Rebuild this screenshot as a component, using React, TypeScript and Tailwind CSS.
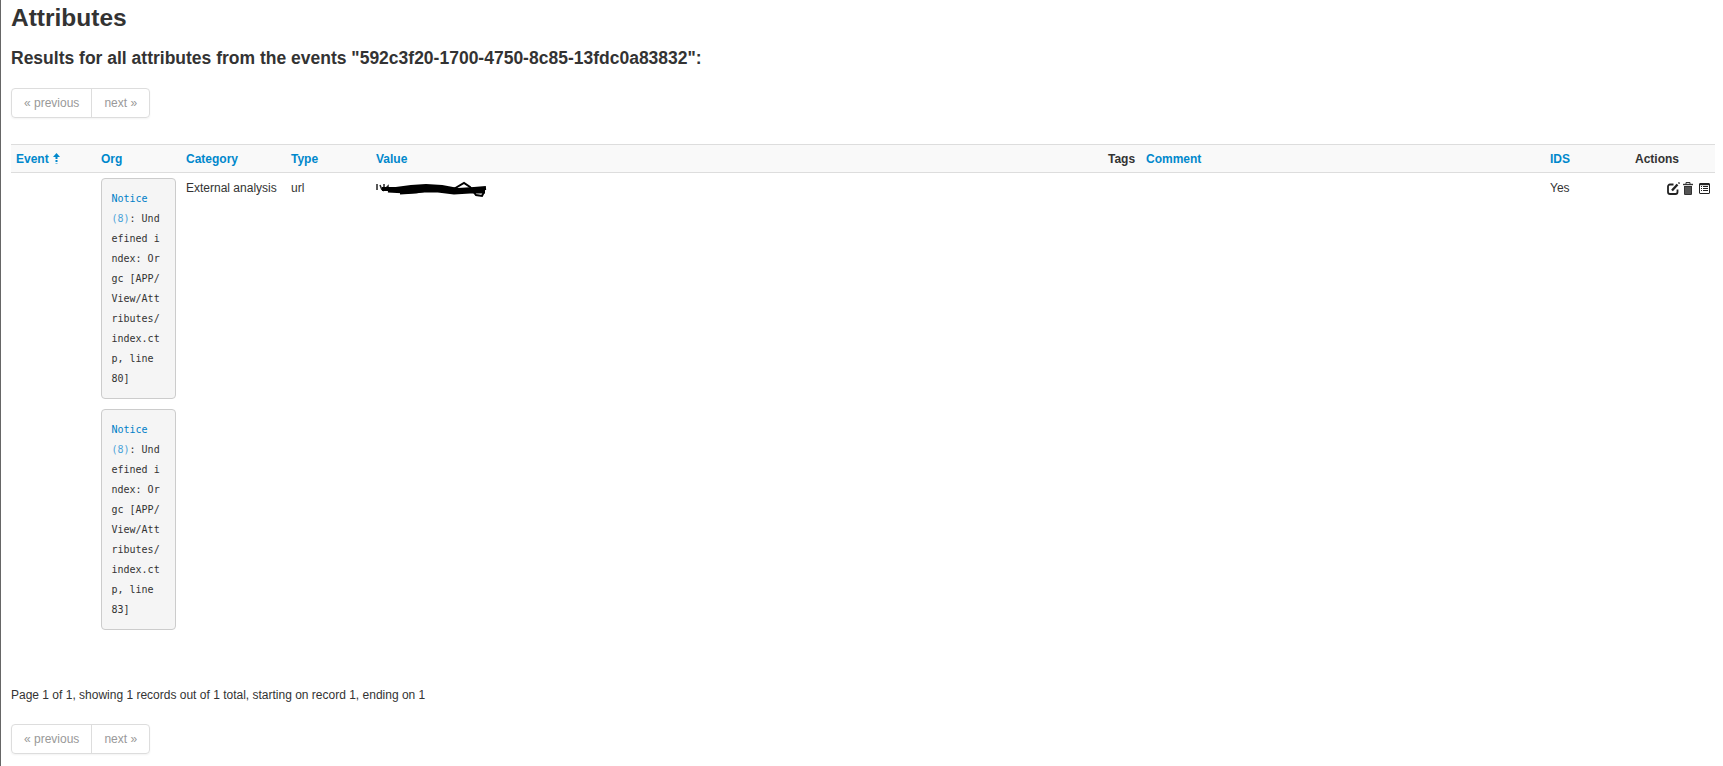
const columns = [
    { label: 'Event', link: true, width: 'w-[85px]' },
    { label: 'Org', link: true, width: 'w-[85px]' },
    { label: 'Category', link: true, width: 'w-[105px]' },
    { label: 'Type', link: true, width: 'w-[85px]' },
    { label: 'Value', link: true, width: 'w-[732px]' },
    { label: 'Tags', link: false, width: 'w-[38px]' },
    { label: 'Comment', link: true, width: 'w-[404px]' },
    { label: 'IDS', link: true, width: 'w-[85px]' },
    { label: 'Actions', link: false, width: 'w-[85px]' },
];

function Pager() {
    return (
        <div className="inline-flex h-[30px] rounded border border-[#ddd] shadow-[0_1px_2px_rgba(0,0,0,0.05)] text-[#999]">
            <span className="px-[12px] leading-[28px] border-r border-[#ddd]">« previous</span>
            <span className="px-[12px] leading-[28px]">next »</span>
        </div>
    );
}

function Notice({ line }: { line: number }) {
    return (
        <pre className="w-[75px] mb-[10px] p-[9.5px] bg-[#f5f5f5] border border-[#ccc] rounded text-[10px] leading-[20px] text-[#333] whitespace-pre-wrap break-all font-['DejaVu_Sans_Mono',monospace]">
            <span className="text-[#0080c8]">Notice</span> <span className="text-[#4ba3d9]">(8)</span>: Undefined index: Orgc [APP/View/Attributes/index.ctp, line {line}]
        </pre>
    );
}

function SortArrow() {
    return (
        <svg width="7" height="11" viewBox="0 0 7 11" className="inline-block ml-[4px] mb-[1px]">
            <path d="M3.5 0 L7 4 H0 Z" fill="#0088cc" />
            <path d="M3.5 4 V10.5" stroke="#0088cc" strokeWidth="2" strokeDasharray="2 1" />
        </svg>
    );
}

function Scribble() {
    return (
        <svg width="112" height="17" viewBox="0 0 112 17" className="mt-[3px]">
            <path d="M1 3 V9 M4 4 L6 9 M8 3 V9 L12 5 V9" fill="none" stroke="#222" strokeWidth="1.5" />
            <path d="M6 8 L20 8 L35 6 L50 5 L66 6 L82 9 L98 8 L110 7" fill="none" stroke="#000" strokeWidth="4" />
            <path d="M12 9 L30 10 L48 9 L62 9 L78 11 L94 10 L109 10" fill="none" stroke="#000" strokeWidth="5" />
            <path d="M24 12 L40 11 L62 7 L70 10" fill="none" stroke="#000" strokeWidth="3" />
            <path d="M76 9 L88 2 L94 6 L100 14 L106 15 L108 11" fill="none" stroke="#000" strokeWidth="2" />
        </svg>
    );
}

function EditIcon() {
    return (
        <svg width="13" height="13" viewBox="0 0 13 13" fill="none" stroke="#222">
            <path d="M6.5 2.5 H3 A2 2 0 0 0 1 4.5 V10 A2 2 0 0 0 3 12 H8.5 A2 2 0 0 0 10.5 10 V7.5" strokeWidth="1.8" />
            <path d="M5 8.5 L10.5 2.5" strokeWidth="2.4" />
            <path d="M11.5 1.5 L12.5 0.5" strokeWidth="1.6" />
        </svg>
    );
}

function TrashIcon() {
    return (
        <svg width="10" height="13" viewBox="0 0 10 13" fill="none">
            <path d="M3 2 V0.5 H7 V2" stroke="#333" />
            <path d="M0 2.5 H10" stroke="#333" strokeWidth="1.4" />
            <path d="M1 4 H9 V12 A1 1 0 0 1 8 13 H2 A1 1 0 0 1 1 12 Z" fill="#333" />
            <path d="M3 5 V12 M5 5 V12 M7 5 V12" stroke="#888" strokeWidth="0.8" />
        </svg>
    );
}

function ListIcon() {
    return (
        <svg width="11" height="11" viewBox="0 0 11 11" fill="none" stroke="#222">
            <rect x="0.5" y="0.5" width="10" height="10" rx="0.5" />
            <path d="M0.5 1.5 H10.5" strokeWidth="1.4" />
            <path d="M2 3.5 H3 M4 3.5 H9 M2 5.5 H3 M4 5.5 H9 M2 7.5 H3 M4 7.5 H9" />
        </svg>
    );
}

export default function App() {
    return (
        <div className="min-h-[766px] border-l border-[#666] pl-[10px] bg-white text-[12px] leading-[20px] text-[#333] font-['Liberation_Sans',Arial,sans-serif] overflow-hidden">
            <h2 className="pt-[3px] text-[24.5px] leading-[30px] font-bold">Attributes</h2>
            <h4 className="mt-[15px] text-[17.5px] leading-[20px] font-bold">Results for all attributes from the events "592c3f20-1700-4750-8c85-13fdc0a83832":</h4>

            <div className="mt-[20px] h-[30px]"><Pager /></div>

            <table className="mt-[26px] w-[1704px] table-fixed border-collapse">
                <thead>
                    <tr className="h-[28px] bg-[#f9f9f9] border-y border-[#ddd]">
                        {columns.map((c) => (
                            <th key={c.label} className={`${c.width} px-[5px] text-left font-bold ${c.link ? 'text-[#0088cc]' : 'text-[#333]'}`}>
                                {c.label}
                                {c.label === 'Event' && <SortArrow />}
                            </th>
                        ))}
                    </tr>
                </thead>
                <tbody>
                    <tr className="align-top">
                        <td className="p-[5px]" />
                        <td className="p-[5px]">
                            <Notice line={80} />
                            <Notice line={83} />
                        </td>
                        <td className="p-[5px]">External analysis</td>
                        <td className="p-[5px]">url</td>
                        <td className="p-[5px]">
                            <Scribble />
                        </td>
                        <td className="p-[5px]" />
                        <td className="p-[5px]" />
                        <td className="p-[5px]">Yes</td>
                        <td className="p-[5px]">
                            <div className="flex justify-end items-center gap-[3px] mt-[4px]">
                                <EditIcon />
                                <TrashIcon />
                                <span className="ml-[3px] flex"><ListIcon /></span>
                            </div>
                        </td>
                    </tr>
                </tbody>
            </table>

            <p className="mt-[40px]">Page 1 of 1, showing 1 records out of 1 total, starting on record 1, ending on 1</p>
            <div className="mt-[19px]"><Pager /></div>
        </div>
    );
}
